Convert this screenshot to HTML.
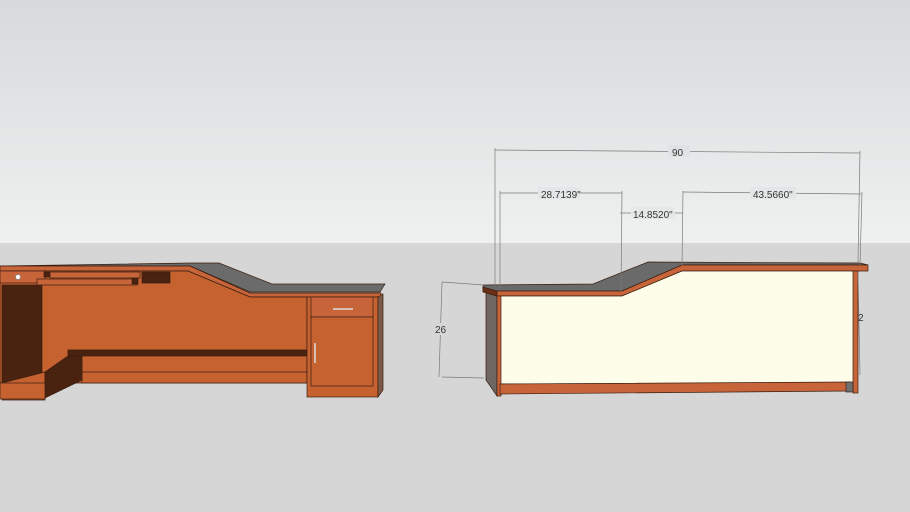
<!DOCTYPE html>
<html><head><meta charset="utf-8"><style>
html,body{margin:0;padding:0;width:910px;height:512px;overflow:hidden}
svg{display:block}
text{font-family:"Liberation Sans",sans-serif;font-size:10px;fill:#333}
</style></head><body>
<svg width="910" height="512" viewBox="0 0 910 512" xmlns="http://www.w3.org/2000/svg">
<defs><linearGradient id="sky" x1="0" y1="0" x2="0" y2="1">
<stop offset="0" stop-color="#d6dada"/><stop offset="1" stop-color="#eff1f1"/></linearGradient></defs>
<rect width="910" height="243" fill="url(#sky)"/>
<rect y="243" width="910" height="269" fill="#d6d6d6"/>

<!-- LEFT DESK -->
<g stroke="#3a1e10" stroke-width="0.7">
<polygon points="0,266 190,263 219,263 272,284 385,284 380,292 250,292 190,266" fill="#6b6b6b"/>
<polygon points="0,266 190,266 250,293 381,293 381,297 250,297 188,271 0,271" fill="#c8643a"/>
<polygon points="0,271 188,271 250,297 307,297 307,383 0,383" fill="#c5622f"/>
<rect x="2" y="285" width="40" height="98" fill="#4a2210"/>
<rect x="0" y="271" width="45" height="12" fill="#c8643a"/>
<circle cx="18" cy="277" r="2.5" fill="#fff" stroke="#888"/>
<rect x="44" y="272" width="6" height="5" fill="#4a2210"/>
<rect x="50" y="272" width="90" height="6" fill="#c8643a"/>
<rect x="37" y="279" width="100" height="6" fill="#c8643a"/>
<rect x="132" y="278" width="6" height="6" fill="#4a2210"/>
<rect x="142" y="272" width="28" height="11" fill="#4a2210"/>
<polygon points="68,350 307,350 307,356 68,356" fill="#4a2210"/>
<rect x="82" y="356" width="225" height="27" fill="#c5622f"/>
<line x1="82" y1="372" x2="307" y2="372"/>
<polygon points="2,383 45,372 45,400 2,400" fill="#c5622f"/>
<polygon points="45,372 68,356 82,356 82,380 45,398" fill="#4a2210"/>
<rect x="0" y="383" width="45" height="16" fill="#c5622f"/>
<rect x="307" y="297" width="71" height="100" fill="#c5622f"/>
<rect x="311" y="297" width="62" height="20" fill="#c8643a"/>
<rect x="311" y="317" width="62" height="69" fill="#c5622f"/>
<polygon points="378,297 383,294 383,390 378,397" fill="#7a5a48"/>
</g>
<line x1="333" y1="309" x2="353" y2="309" stroke="#ddd" stroke-width="1.5"/>
<line x1="315" y1="343" x2="315" y2="363" stroke="#ddd" stroke-width="1.5"/>

<!-- RIGHT DESK -->
<g stroke="#3a1e10" stroke-width="0.7">
<polygon points="483,285 593,284 648,262 860,263 868,265 682,265 622,291 483,291" fill="#6a6a6a"/>
<polygon points="486,292 497,296 497,396 486,380" fill="#6e6660"/>
<polygon points="483,287 497,291 497,296 483,292" fill="#6b2f18"/>
<polygon points="497,291 622,291 682,265 868,265 868,271 682,271 622,296 497,296" fill="#c8643a"/>
<polygon points="500,296 622,296 682,271 854,271 854,383 500,384" fill="#fefde9"/>
<rect x="497" y="296" width="4" height="100" fill="#c8643a"/>
<polygon points="500,384 850,382 850,391 500,394" fill="#c8643a"/>
<rect x="853" y="271" width="5" height="122" fill="#c8643a"/>
<rect x="846" y="382" width="7" height="10" fill="#707070"/>
</g>

<!-- DIMENSIONS -->
<g stroke="#7a7a7a" stroke-width="0.7" fill="none">
<line x1="495" y1="150" x2="860" y2="153"/>
<line x1="495" y1="148" x2="495" y2="286"/>
<line x1="860" y1="151" x2="858" y2="263"/>
<line x1="500" y1="193" x2="622" y2="193"/>
<line x1="500" y1="191" x2="500" y2="290"/>
<line x1="622" y1="191" x2="621" y2="292"/>
<line x1="620" y1="213" x2="683" y2="213"/>
<line x1="683" y1="192" x2="861" y2="194"/>
<line x1="683" y1="191" x2="682" y2="266"/>
<line x1="862" y1="192" x2="860" y2="265"/>
<line x1="442" y1="282" x2="484" y2="285"/>
<line x1="442" y1="377" x2="484" y2="378"/>
<line x1="442" y1="282" x2="439" y2="377"/>
<line x1="858" y1="272" x2="860" y2="375"/>
</g>
<g>
<rect x="668" y="145" width="22" height="12" fill="#e0e3e3"/>
<rect x="538" y="187" width="42" height="12" fill="#e3e6e6"/>
<rect x="631" y="207" width="44" height="12" fill="#e6e8e8"/>
<rect x="750" y="187" width="46" height="12" fill="#e3e6e6"/>
<rect x="433" y="323" width="14" height="12" fill="#d6d6d6"/>
</g>
<text x="672" y="156">90</text>
<text x="541" y="198">28.7139"</text>
<text x="633" y="218">14.8520"</text>
<text x="753" y="198">43.5660"</text>
<text x="435" y="333">26</text>
<text x="858" y="321">2</text>
</svg>
</body></html>
